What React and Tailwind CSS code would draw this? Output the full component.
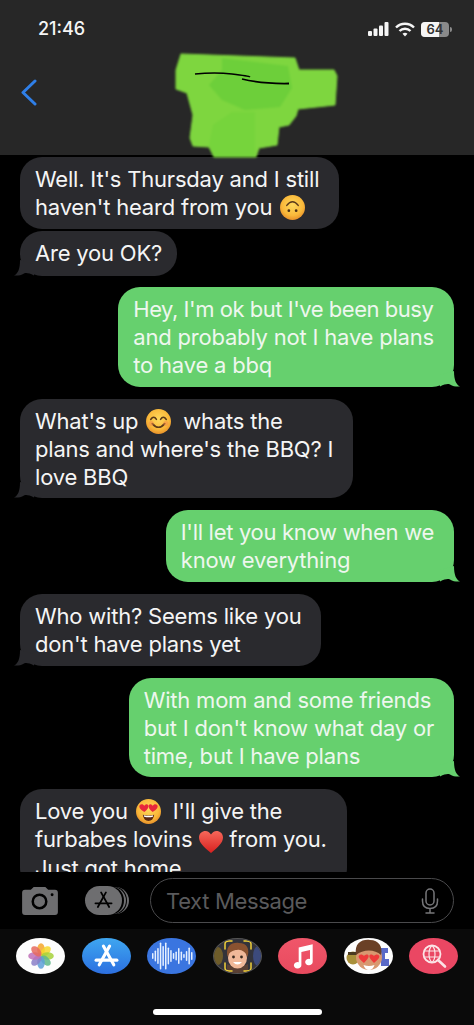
const font = { fontFamily: 'Inter, "Liberation Sans", sans-serif' };

function EmojiFace({ id, children }) {
  return (
    <svg viewBox="0 0 24 24" className="inline-block w-[25px] h-[25px] align-[-5px] ml-[2px]">
      <defs>
        <radialGradient id={id} cx="50%" cy="40%" r="60%">
          <stop offset="0%" stopColor="#ffd95c" />
          <stop offset="70%" stopColor="#f9b83a" />
          <stop offset="100%" stopColor="#e8912a" />
        </radialGradient>
      </defs>
      <circle cx="12" cy="12" r="12" fill={`url(#${id})`} />
      {children}
    </svg>
  );
}

function UpsideDown() {
  return (
    <EmojiFace id="upside">
      <path d="M6.500 10Q12 3 17.500 10" fill="none" stroke="#5b3a1a" strokeWidth="1.400" strokeLinecap="round" />
      <circle cx="8.500" cy="15" r="1.300" fill="#4a2e14" />
      <circle cx="15.500" cy="15" r="1.300" fill="#4a2e14" />
    </EmojiFace>
  );
}

function Smiling() {
  return (
    <EmojiFace id="smiling">
      <path d="M4.500 10Q7.500 6 10 10M14 10Q16.500 6 19.500 10" fill="none" stroke="#5b3a1a" strokeWidth="1.500" strokeLinecap="round" />
      <path d="M6 14Q12 21 18 14" fill="none" stroke="#5b3a1a" strokeWidth="1.600" strokeLinecap="round" />
      <circle cx="5" cy="14" r="2.400" fill="#f58a4a" opacity="0.5" />
      <circle cx="19" cy="14" r="2.400" fill="#f58a4a" opacity="0.5" />
    </EmojiFace>
  );
}

function HeartEyes() {
  return (
    <EmojiFace id="hearteyes">
      <path d="M8 12.500C4 10 2.500 8 3.500 6C4.500 4.500 7 4.500 8 6.500C9 4.500 11 4.500 11.800 6C12.500 8 11 10 8 12.500Z" fill="#e8283c" />
      <path d="M16 12.500C13 10 11.500 8 12.200 6C13 4.500 15 4.500 16 6.500C17 4.500 19.500 4.500 20.500 6C21.500 8 20 10 16 12.500Z" fill="#e8283c" />
      <path d="M6.500 15Q12 16.500 17.500 15Q16.500 21 12 21Q7.500 21 6.500 15Z" fill="#5b2a14" />
      <path d="M7.500 15.500Q12 16.500 16.500 15.500L16.200 17Q12 18 7.800 17Z" fill="#fff" />
    </EmojiFace>
  );
}

function Heart() {
  return (
    <svg viewBox="0 0 26 24" className="inline-block w-[24px] h-[24px] align-[-7px] ml-[1px]">
      <defs>
        <linearGradient id="heart" x1="0" y1="0" x2="0" y2="1">
          <stop offset="0%" stopColor="#f5685a" />
          <stop offset="100%" stopColor="#d8201f" />
        </linearGradient>
      </defs>
      <path d="M13 24C5 17 0 12.500 0 7C0 2.500 3.500 0 7 0C9.500 0 11.800 1.500 13 4C14.200 1.500 16.500 0 19 0C22.500 0 26 2.500 26 7C26 12.500 21 17 13 24Z" fill="url(#heart)" />
    </svg>
  );
}

function TailLeft() {
  return (
    <svg viewBox="0 0 20 16" className="absolute left-[-6px] bottom-0 w-[20px] h-[16px]">
      <path d="M6 0L20 4V15.500C15 13 12 12.500 10 13.500C7 15.500 3 15.800 0 15.500C4 13.500 6 9 6 0Z" fill="#2a2a2e" />
    </svg>
  );
}

function TailRight() {
  return (
    <svg viewBox="0 0 20 16" className="absolute right-[-6px] bottom-0 w-[20px] h-[16px]">
      <path d="M14 0L0 4V15.500C5 13 8 12.500 10 13.500C13 15.500 17 15.800 20 15.500C16 13.500 14 9 14 0Z" fill="#66d06e" />
    </svg>
  );
}

function Incoming({ children, tail, className }) {
  return (
    <div className={`relative self-start ml-[20px] bg-[#2a2a2e] text-[#f5f5f5] rounded-[22px] pl-[15px] pr-[20px] py-[8px] shrink-0 ${className}`}>
      {tail && <TailLeft />}
      <div className="relative">{children}</div>
    </div>
  );
}

function Outgoing({ children, className }) {
  return (
    <div className={`relative self-end mr-[20px] bg-[#66d06e] text-[#eef7ee] rounded-[22px] pl-[15px] pr-[20px] py-[8px] shrink-0 ${className}`}>
      <TailRight />
      <div className="relative">{children}</div>
    </div>
  );
}

function Scribble() {
  return (
    <svg viewBox="0 0 474 160" className="absolute left-0 top-0 w-[474px] h-[160px] pointer-events-none">
      <g className="blur-[1px]">
        <path d="M181 54L295 58L299 70L334 70L337 76L335 105L298 109L296 116L289 125L279 127L277 145L259 148L256 157L214 157L209 147L193 146L190 138L193 115L187 93L176 89L176 70Z" fill="#7ed63f" stroke="#7ed63f" strokeWidth="1" strokeLinejoin="round" />
        <path d="M222 58L288 66L292 88L280 107L245 110L222 100L209 85L222 70Z" fill="#6dcf3a" />
        <path d="M213 125L232 112H255V157H214L209 145Z" fill="#76d43c" />
      </g>
      <path d="M195 74Q215 72 232 74T250 77" fill="none" stroke="#000" strokeWidth="1.500" />
      <path d="M242 79Q262 84 289 83.500" fill="none" stroke="#000" strokeWidth="1.800" />
    </svg>
  );
}

function StatusIcons() {
  return (
    <div className="flex items-center gap-[6px]">
      <svg viewBox="0 0 21 14" className="w-[21px] h-[14px]" fill="#f5f5f5">
        <rect x="0" y="9" width="4" height="5" rx="1" />
        <rect x="5.500" y="6.500" width="4" height="7.500" rx="1" />
        <rect x="11" y="3.500" width="4" height="10.500" rx="1" />
        <rect x="16.500" y="0" width="4" height="14" rx="1" />
      </svg>
      <svg viewBox="0 0 20 15" className="w-[20px] h-[15px]" fill="none" stroke="#f5f5f5" strokeWidth="2.400">
        <path d="M1 5.500C6 0.500 14 0.500 19 5.500" />
        <path d="M4.500 9C7.500 6 12.500 6 15.500 9" />
        <path d="M10 14.500L7.500 11.800C9 10.500 11 10.500 12.500 11.800Z" fill="#f5f5f5" stroke="none" />
      </svg>
      <div className="flex items-center">
        <div className="relative w-[28px] h-[15px] rounded-[4px] bg-[#8a8a8a] overflow-hidden flex items-center justify-center">
          <div className="absolute left-0 top-0 bottom-0 w-[18px] bg-[#f5f5f5]" />
          <span className="relative text-[#333] text-[13px] font-semibold leading-none">64</span>
        </div>
        <div className="w-[2px] h-[5px] ml-px rounded-r-sm bg-[#8a8a8a]" />
      </div>
    </div>
  );
}

function AppStoreGlyph({ color, w = 3 }) {
  return (
    <g fill="none" stroke={color} strokeWidth={w} strokeLinecap="round">
      <path d="M16 3L6 21" />
      <path d="M10 3L20 21" />
      <path d="M3 16.500H23" />
    </g>
  );
}

function Pill({ className, children }) {
  return (
    <div className={`w-[49px] h-[36px] rounded-[50%] overflow-hidden flex items-center justify-center ${className}`}>
      {children}
    </div>
  );
}

function PhotosApp() {
  const petals = [
    ['#f4a62a', 0], ['#f4d72a', 45], ['#a6d13a', 90], ['#5fb98a', 135],
    ['#5e9fd8', 180], ['#8a7fc8', 225], ['#c070b8', 270], ['#e66a5e', 315],
  ];
  return (
    <Pill className="bg-[#fdfdfd]">
      <svg viewBox="0 0 26 26" className="w-[26px] h-[26px]">
        {petals.map(([c, a]) => (
          <ellipse key={a} cx="13" cy="6.500" rx="3.800" ry="6.300" fill={c} opacity="0.85" transform={`rotate(${a} 13 13)`} />
        ))}
      </svg>
    </Pill>
  );
}

function AppStoreApp() {
  return (
    <Pill className="bg-gradient-to-b from-[#3fa6f0] to-[#2d6fe0]">
      <svg viewBox="0 0 26 26" className="w-[27px] h-[27px]">
        <AppStoreGlyph color="#fff" />
      </svg>
    </Pill>
  );
}

function SoundApp() {
  const bars = [6, 11, 16, 27, 20, 27, 17, 12, 6, 9, 16, 9, 4, 10, 17, 8];
  return (
    <Pill className="bg-[#3a75e0]">
      <svg viewBox="0 0 42 28" className="w-[42px] h-[28px]">
        {bars.map((h, i) => (
          <rect key={i} x={1 + i * 2.600} y={14 - h / 2} width="1.500" height={h} rx="0.750" fill="#e6f0ff" />
        ))}
      </svg>
    </Pill>
  );
}

function MemojiCam() {
  return (
    <Pill className="bg-[#33333a] border border-[#555]">
      <svg viewBox="0 0 49 36" className="w-[49px] h-[36px] shrink-0">
        <ellipse cx="5" cy="18" rx="5" ry="9" fill="#6e5c2a" />
        <ellipse cx="45" cy="18" rx="5" ry="10" fill="#3c4a7c" />
        <path d="M14 26Q24 32 35 26V36H14Z" fill="#5a4034" />
        <ellipse cx="24.500" cy="20" rx="9.500" ry="10.500" fill="#f0b899" />
        <path d="M14.500 19C12 8 19 4 26 5C34 5 37 11 34.500 19C33 14 28 11 24 12C20 12 16 14 14.500 19Z" fill="#8a5230" />
        <circle cx="20.500" cy="19" r="1.400" fill="#3a2a20" />
        <circle cx="28.500" cy="19" r="1.400" fill="#3a2a20" />
        <path d="M20 24Q24.500 29 29 24Z" fill="#fff" />
        <path d="M12 11V6Q12 3 16 3H19M31 3H34Q38 3 38 6V11M12 25V30Q12 33 16 33H19M31 33H34Q38 33 38 30V25" fill="none" stroke="#f2d23a" strokeWidth="1.500" strokeLinecap="round" />
      </svg>
    </Pill>
  );
}

function MusicApp() {
  return (
    <Pill className="bg-gradient-to-b from-[#f0566a] to-[#e84a5e]">
      <svg viewBox="0 0 24 26" className="w-[26px] h-[28px]" fill="#fff">
        <path d="M8 5L21 2V18.500A3.500 3 0 1 1 18.500 15.700V7.500L10.500 9.300V21.500A3.500 3 0 1 1 8 18.700Z" />
      </svg>
    </Pill>
  );
}

function StickersApp() {
  return (
    <Pill className="bg-[#fdfdfd]">
      <svg viewBox="0 0 49 36" className="w-[49px] h-[36px] shrink-0">
        <circle cx="9" cy="20" r="6.500" fill="#a8903a" />
        <rect x="4" y="14" width="10" height="3" fill="#4a3a20" />
        <path d="M37 10H44V15H41V21H45V28H37Z" fill="#5a6ac8" />
        <circle cx="25" cy="19" r="13" fill="#d89870" />
        <path d="M12 17C10 5 18 1 26 2C35 2 39 9 37 17C31 11 19 11 12 17Z" fill="#6a4026" />
        <path d="M20 25C15 21 14 19 15 17.500C16 16 18.500 16 20 18C21.500 16 24 16 24.500 17.500C25 19 24 21 20 25Z" fill="#ee3b3b" />
        <path d="M30 25C26 21 25 19 25.500 17.500C26 16 28.500 16 30 18C31.500 16 34 16 35 17.500C36 19 35 21 30 25Z" fill="#ee3b3b" />
        <path d="M19.500 27Q25 29 30.500 27Q29 32 25 32Q21 32 19.500 27Z" fill="#fff" />
      </svg>
    </Pill>
  );
}

function SearchApp() {
  return (
    <Pill className="bg-[#ea4763]">
      <svg viewBox="0 0 26 26" className="w-[26px] h-[26px]" fill="none" stroke="#fbe3e6">
        <circle cx="11" cy="11" r="8.500" strokeWidth="1.800" />
        <path d="M11 2.500C7 6 7 16 11 19.500C15 16 15 6 11 2.500ZM3.200 8H18.800M3.200 14H18.800" strokeWidth="1.200" />
        <path d="M17 17L24 23.500" strokeWidth="2.600" strokeLinecap="round" />
      </svg>
    </Pill>
  );
}

export default function App() {
  return (
    <div className="relative w-[474px] h-[1025px] overflow-hidden bg-black flex flex-col text-[22px] leading-[28px] tracking-[-0.2px]" style={font}>
      <header className="h-[155px] shrink-0 bg-[#272727] flex flex-col">
        <div className="flex items-center justify-between pl-[38px] pr-[22px] pt-[14px] h-[44px] tracking-normal">
          <span className="text-[#f5f5f5] text-[18px] font-medium leading-[24px]">21:46</span>
          <StatusIcons />
        </div>
        <div className="pl-[20px] pt-[35px]">
          <svg viewBox="0 0 17 27" className="w-[17px] h-[27px]" fill="none" stroke="#2f7fe8" strokeWidth="3" strokeLinecap="round" strokeLinejoin="round">
            <path d="M15 2L3 13.500L15 25" />
          </svg>
        </div>
      </header>

      <main className="h-[717px] shrink-0 overflow-hidden flex flex-col pt-[2px]">
        <Incoming>
          Well. It's Thursday and I still<br />haven't heard from you <UpsideDown />
        </Incoming>
        <Incoming tail className="mt-[2px] pb-[9px] pr-[15px]!">Are you OK?</Incoming>
        <Outgoing className="mt-[11px]">
          <span className="tracking-[-0.47px]">Hey, I'm ok but I've been busy</span><br />and probably not I have plans<br />to have a bbq
        </Outgoing>
        <Incoming tail className="mt-[12px] pb-[7px]">
          What's up <Smiling />&nbsp; whats the<br />plans and where's the BBQ? I<br />love BBQ
        </Incoming>
        <Outgoing className="mt-[12px]">
          <span className="tracking-[-0.3px]">I'll let you know when we</span><br />know everything
        </Outgoing>
        <Incoming tail className="mt-[12px]">
          Who with? Seems like you<br />don't have plans yet
        </Incoming>
        <Outgoing className="mt-[12px] pb-[7px]">
          With mom and some friends<br />but I don't know what day or<br />time, but I have plans
        </Outgoing>
        <Incoming className="mt-[12px]">
          Love you <HeartEyes />&nbsp; I'll give the<br />furbabes lovins <Heart /> from you.<br />Just got home
        </Incoming>
      </main>

      <div className="h-[57px] shrink-0 bg-black flex items-center pl-[22px] pr-[20px]">
        <svg viewBox="0 0 37 30" className="w-[36px] h-[29px] shrink-0">
          <path d="M3 4H9L12 1H24L27 4H34Q37 4 37 7V27Q37 30 34 30H3Q0 30 0 27V7Q0 4 3 4Z" fill="#6e6e70" />
          <circle cx="18" cy="16" r="7" fill="none" stroke="#000" strokeWidth="2.600" />
          <circle cx="31" cy="9" r="1.500" fill="#000" />
        </svg>
        <div className="ml-[27px] relative w-[44px] h-[30px] shrink-0">
          <div className="absolute left-[8px] top-[1px] w-[36px] h-[27px] rounded-full border-r-2 border-[#6e6e70]" />
          <div className="absolute left-[4px] top-[1px] w-[37px] h-[27px] rounded-full border-r-2 border-[#6e6e70]" />
          <div className="absolute left-0 top-0 w-[37px] h-[29px] rounded-full bg-[#6e6e70] flex items-center justify-center">
            <svg viewBox="0 0 26 26" className="w-[21px] h-[21px]">
              <AppStoreGlyph color="#000" w={2.200} />
            </svg>
          </div>
        </div>
        <div className="ml-[21px] flex-1 h-[45px] rounded-full border border-[#4a4a4c] flex items-center justify-between pl-[15px] pr-[14px]">
          <span className="text-[#5a5a5c] tracking-[-0.35px]">Text Message</span>
          <svg viewBox="0 0 18 26" className="w-[18px] h-[26px]" fill="none" stroke="#77777a" strokeWidth="1.500" strokeLinecap="round">
            <rect x="5" y="1" width="8" height="16" rx="4" />
            <path d="M1.500 11V13Q1.500 20.500 9 20.500Q16.500 20.500 16.500 13V11M9 20.500V25M5 25H13" />
          </svg>
        </div>
      </div>

      <div className="flex-1 bg-[#0a0a0a] flex flex-col items-center">
        <div className="w-full flex justify-between pl-[16px] pr-[16px] pt-[9px]">
          <PhotosApp />
          <AppStoreApp />
          <SoundApp />
          <MemojiCam />
          <MusicApp />
          <StickersApp />
          <SearchApp />
        </div>
        <div className="mt-[35px] w-[169px] h-[6px] rounded-full bg-white" />
      </div>

      <Scribble />
    </div>
  );
}
